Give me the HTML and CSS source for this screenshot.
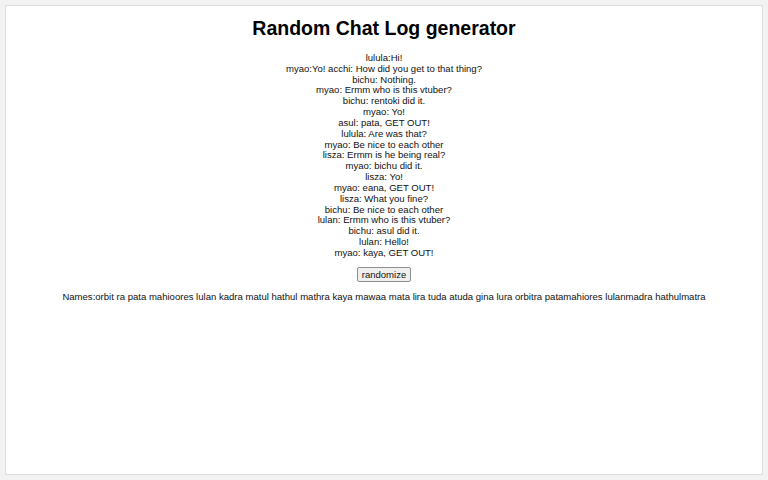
FILE: index.html
```html
<!DOCTYPE html>
<html lang="en">
<head>
    <meta charset="UTF-8">
    <meta name="viewport" content="width=device-width, initial-scale=1.0">
    <title>Random Chat Log generator</title>
    <link rel="stylesheet" href="styles.css">
</head>
<body>
    <div class="page">
        <h1>Random Chat Log generator</h1>

        <div id="chat-log" class="chat-log">
            <p>lulula:Hi!</p>
            <p>myao:Yo! acchi: How did you get to that thing?</p>
            <p>bichu: Nothing.</p>
            <p>myao: Ermm who is this vtuber?</p>
            <p>bichu: rentoki did it.</p>
            <p>myao: Yo!</p>
            <p>asul: pata, GET OUT!</p>
            <p>lulula: Are was that?</p>
            <p>myao: Be nice to each other</p>
            <p>lisza: Ermm is he being real?</p>
            <p>myao: bichu did it.</p>
            <p>lisza: Yo!</p>
            <p>myao: eana, GET OUT!</p>
            <p>lisza: What you fine?</p>
            <p>bichu: Be nice to each other</p>
            <p>lulan: Ermm who is this vtuber?</p>
            <p>bichu: asul did it.</p>
            <p>lulan: Hello!</p>
            <p>myao: kaya, GET OUT!</p>
        </div>

        <button id="randomize-btn">randomize</button>

        <p id="names" class="names">Names:orbit ra pata mahioores lulan kadra matul hathul mathra kaya mawaa mata lira tuda atuda gina lura orbitra patamahiores lulanmadra hathulmatra</p>
    </div>
</body>
</html>
```

FILE: styles.css
```css
body {
    font-family: "Liberation Sans", Arial, sans-serif;
    background-color: #f2f2f2;
    margin: 0;
    padding: 5px;
}

.page {
    background-color: white;
    border: 1px solid #dedede;
    height: 470px;
    box-sizing: border-box;
    text-align: center;
    padding-top: 11px;
}

h1 {
    font-size: 19.5px;
    margin: 0 0 13px;
}

.chat-log {
    font-size: 9.55px;
    line-height: 10.83px;
    color: #111;
}

.chat-log p {
    margin: 0;
}

button {
    font-family: "Liberation Sans", Arial, sans-serif;
    font-size: 9.55px;
    margin-top: 8px;
    padding: 1px 4px;
    background-color: #efefef;
    border: 1px solid #8f8f8f;
    border-radius: 2px;
    color: #111;
}

.names {
    font-size: 9.55px;
    margin: 9px 0 0;
    color: #111;
}
```
